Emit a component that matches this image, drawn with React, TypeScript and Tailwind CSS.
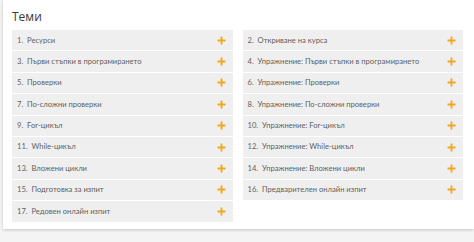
const left = [
  "1.  Ресурси",
  "3.  Първи стъпки в програмирането",
  "5.  Проверки",
  "7.  По-сложни проверки",
  "9.  For-цикъл",
  "11.  While-цикъл",
  "13.  Вложени цикли",
  "15.  Подготовка за изпит",
  "17.  Редовен онлайн изпит",
];

const right = [
  "2.  Откриване на курса",
  "4.  Упражнение: Първи стъпки в програмирането",
  "6.  Упражнение: Проверки",
  "8.  Упражнение: По-сложни проверки",
  "10.  Упражнение: For-цикъл",
  "12.  Упражнение: While-цикъл",
  "14.  Упражнение: Вложени цикли",
  "16.  Предварителен онлайн изпит",
];

function Plus() {
  return (
    <svg width="9" height="9" viewBox="0 0 9 9" className="shrink-0">
      <path d="M4.5 0.5v8M0.5 4.5h8" stroke="#f2a81d" strokeWidth="1.8" />
    </svg>
  );
}

function Column({ items }: { items: string[] }) {
  return (
    <div className="flex flex-col gap-px">
      {items.map((t) => (
        <div key={t} className="h-[20.4px] bg-[#efefef] flex items-center justify-between pl-[5px] pr-[7px]">
          <span className="text-[7.6px] text-[#5f5f5f] whitespace-pre">{t}</span>
          <Plus />
        </div>
      ))}
    </div>
  );
}

export default function App() {
  return (
    <div className="w-[474px] h-[242px] bg-[#f4f4f4] overflow-hidden" style={{ fontFamily: "Lato, 'Open Sans', sans-serif" }}>
      <div className="ml-[3px] h-[229px] bg-white shadow-[0_1px_3px_rgba(0,0,0,0.2)] pl-[9px] pr-[11px] pt-[9px]">
        <h2 className="text-[12px] leading-[16px] font-medium text-[#3a3a3a] mb-[5px]" style={{ fontFamily: "'Open Sans', sans-serif" }}>
          Теми
        </h2>
        <div className="grid grid-cols-2 gap-x-[10px] items-start">
          <Column items={left} />
          <Column items={right} />
        </div>
      </div>
    </div>
  );
}
